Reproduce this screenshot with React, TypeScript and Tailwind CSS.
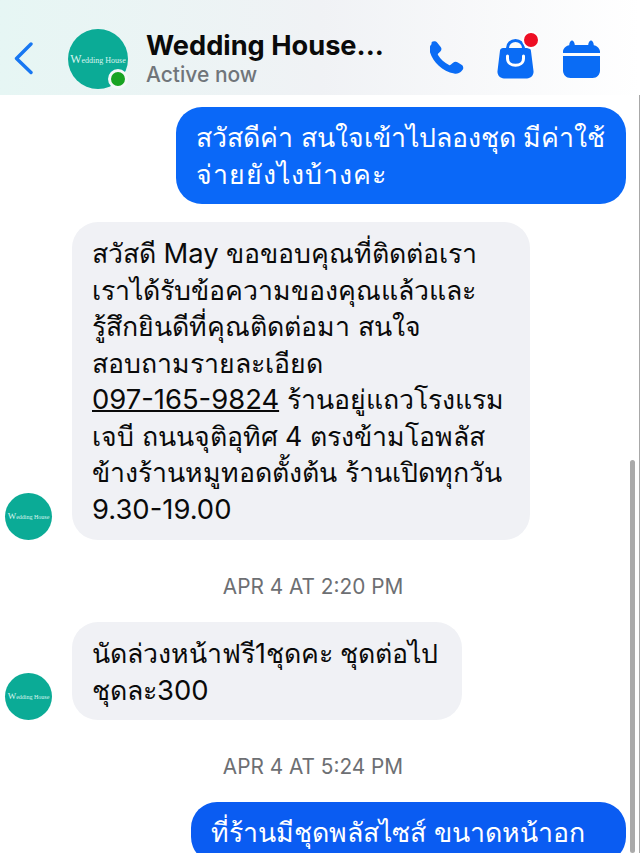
const font = "font-['Inter','Liberation_Sans','Noto_Sans',sans-serif]"

function Avatar({ large }: { large?: boolean }) {
  return (
    <div className={large
      ? 'flex h-[60px] w-[60px] shrink-0 items-center justify-center rounded-full bg-[#0bab96]'
      : 'flex h-[47px] w-[47px] shrink-0 items-center justify-center rounded-full bg-[#0bab96]'}>
      <span className={large
        ? "whitespace-nowrap font-['Liberation_Serif',serif] text-[8px] text-[#d8f5ef]"
        : "whitespace-nowrap font-['Liberation_Serif',serif] text-[6px] text-[#d8f5ef]"}>
        <span className={large ? 'text-[12px]' : 'text-[9px]'}>W</span>edding House
      </span>
    </div>
  )
}

function Header() {
  return (
    <div className="flex h-[95px] items-center bg-gradient-to-r from-[#e6f6f4] via-[#f0f2f5] to-[#ffffff] pt-[22px]">
      <svg className="ml-[14px] mr-[34px] shrink-0" width="20" height="34" viewBox="0 0 20 34" fill="none">
        <path d="M17 2 2.500 16.500 17 30.500" stroke="#1877f2" strokeWidth="3.400" strokeLinecap="round" strokeLinejoin="round" />
      </svg>
      <div className="relative shrink-0">
        <Avatar large />
        <div className="absolute bottom-0 right-0 h-[20px] w-[20px] rounded-full border-[3px] border-[#f4f8f8] bg-[#18a322]" />
      </div>
      <div className="ml-[18px] w-[284px] shrink-0">
        <div className="text-[27.200px] font-bold leading-[32px] text-[#0a0a0a]">Wedding House...</div>
        <div className="text-[21px] font-medium leading-[26px] text-[#70757a]">Active now</div>
      </div>
      <svg className="shrink-0" width="36" height="36" viewBox="5 1.500 32 35.500" preserveAspectRatio="none" fill="#0a6cf5">
        <path d="M6.500 2.500c1.600-1.200 3.800-.9 5 .7l3 4.200c1 1.400.9 3.200-.3 4.400l-1.900 2c-.4.4-.5 1-.2 1.500 1.100 2.100 2.500 4 4.200 5.700 1.700 1.700 3.500 3.100 5.600 4.200.5.300 1.100.200 1.500-.2l2.100-2c1.200-1.200 3-1.300 4.300-.3l3.200 2.300c1.700 1.200 2.100 3.600.8 5.200l-.9 1.100c-1.500 1.900-4 2.900-6.400 2.300-5.300-1.300-9.900-4-13.700-7.800-3.800-3.800-6.500-8.400-7.900-13.600-.8-2.600-.4-5.500 1.400-7.400z" />
      </svg>
      <div className="relative ml-[31px] shrink-0">
        <svg width="37" height="40" viewBox="0 0 37 40" fill="none">
          <path d="M10.500 12V9a8 7.500 0 0 1 16 0v3" stroke="#0a6cf5" strokeWidth="3" />
          <path d="M6 9h25c1.500 0 2.700 1.100 2.900 2.600L36.500 32c.5 4-2.500 7.500-6.500 7.500H7C3 39.500 0 36 .5 32L3 11.600C3.200 10.100 4.500 9 6 9z" fill="#0a6cf5" />
          <path d="M10.500 17v2.500c0 9 16 9 16 0V17" stroke="#fff" strokeWidth="3" strokeLinecap="round" />
        </svg>
        <div className="absolute right-[-6px] top-[-8px] h-[18px] w-[18px] rounded-full border-[2px] border-white bg-[#ee0f24]" />
      </div>
      <svg className="ml-[29px] shrink-0" width="37" height="38" viewBox="0 0 37 38" fill="#0a6cf5">
        <path d="M9 .5c1.300 0 2.500 1.500 2.800 4.500h13.400c.3-3 1.500-4.500 2.800-4.500s2.500 1.500 2.800 4.700c3.300.5 6.200 3.400 6.200 6.300V13H0v-1.500c0-2.900 2.900-5.800 6.200-6.300C6.500 2 7.700.5 9 .5z" />
        <path d="M0 16h37v14.500c0 4-3 7.500-7.500 7.500h-22C3 38 0 34.500 0 30.500z" />
      </svg>
    </div>
  )
}

function Incoming({ children, className }: { children: React.ReactNode; className: string }) {
  return (
    <div className="flex items-end">
      <div className="ml-[5px] mr-[20px]"><Avatar /></div>
      <div className={`whitespace-nowrap rounded-[26px] bg-[#f0f1f5] text-[#0a0a0a] ${className}`}>{children}</div>
    </div>
  )
}

function Stamp({ time }: { time: string }) {
  return <div className="mt-[34px] text-center text-[20.800px] leading-[26px] text-[#6d6f73]">{time}</div>
}

export default function App() {
  return (
    <div className={`relative h-[853px] w-[640px] overflow-hidden bg-white ${font}`}>
      <Header />
      <div className="flex flex-col pr-[14px] pt-[12px] text-[26.700px] leading-[36.500px]">
        <div className="ml-auto w-[450px] whitespace-nowrap rounded-[26px] bg-[#0a68f8] px-[20px] py-[12px] text-white">
          สวัสดีค่า สนใจเข้าไปลองชุด มีค่าใช้<br /><span className="tracking-[1px]">จ่ายยังไงบ้างคะ</span>
        </div>
        <div className="mt-[18px]">
          <Incoming className="w-[458px] px-[20px] py-[13px]">
            สวัสดี <span className="text-[27.400px]">May</span> ขอขอบคุณที่ติดต่อเรา<br />
            เราได้รับข้อความของคุณแล้วและ<br />
            รู้สึกยินดีที่คุณติดต่อมา สนใจ<br />
            สอบถามรายละเอียด<br />
            <span className="text-[27.400px] underline decoration-[2px]">097-165-9824</span> ร้านอยู่แถวโรงแรม<br />
            เจบี ถนนจุติอุทิศ 4 ตรงข้ามโอพลัส<br />
            ข้างร้านหมูทอดตั้งต้น ร้านเปิดทุกวัน<br />
            <span className="text-[27.400px]">9.30-19.00</span>
          </Incoming>
        </div>
        <Stamp time="APR 4 AT 2:20 PM" />
        <div className="mt-[22px]">
          <Incoming className="w-[390px] px-[20px] pb-[12px] pt-[13px]">
            นัดล่วงหน้าฟรี1ชุดคะ ชุดต่อไป<br />ชุดละ<span className="text-[27.400px]">300</span>
          </Incoming>
        </div>
        <Stamp time="APR 4 AT 5:24 PM" />
        <div className="ml-auto mt-[22px] w-[435px] whitespace-nowrap rounded-[26px] bg-[#0a5cf2] px-[20px] py-[12px] text-white">
          ที่ร้านมีชุดพลัสไซส์ ขนาดหน้าอก
        </div>
      </div>
      <div className="absolute right-[5px] top-[460px] h-[393px] w-[5px] rounded-full bg-[#aaaaaa]" />
      <div className="absolute bottom-0 right-0 top-[95px] w-px bg-[#a8a8a8]" />
    </div>
  )
}
